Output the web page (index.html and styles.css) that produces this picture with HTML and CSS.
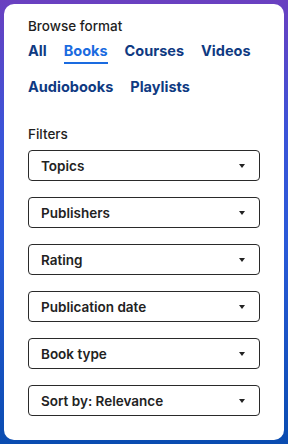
FILE: index.html
```html
<!DOCTYPE html>
<html lang="en">
<head>
  <meta charset="UTF-8">
  <title>Browse format</title>
  <link rel="stylesheet" href="styles.css">
</head>
<body>
  <div class="panel">
    <h3 class="label">Browse format</h3>
    <div class="tabs">
      <a href="#">All</a>
      <a href="#" class="active">Books</a>
      <a href="#">Courses</a>
      <a href="#">Videos</a>
      <a href="#">Audiobooks</a>
      <a href="#">Playlists</a>
    </div>

    <h3 class="label filters-label">Filters</h3>
    <div class="filters">
      <button class="select">Topics <span class="caret"></span></button>
      <button class="select">Publishers <span class="caret"></span></button>
      <button class="select">Rating <span class="caret"></span></button>
      <button class="select">Publication date <span class="caret"></span></button>
      <button class="select">Book type <span class="caret"></span></button>
      <button class="select">Sort by: Relevance <span class="caret"></span></button>
    </div>
  </div>
</body>
</html>
```

FILE: styles.css
```css
body {
  margin: 0;
  padding: 4px;
  height: 444px;
  box-sizing: border-box;
  background: linear-gradient(180deg, #6a40c0 0%, #3a54d8 30%, #2a5ad8 55%, #0a4cb0 100%);
  font-family: Inter, "Noto Sans", sans-serif;
}
.panel {
  background: white;
  border-radius: 10px;
  height: 436px;
  box-sizing: border-box;
  padding: 13px 24px 0 24px;
}
.label {
  margin: 0;
  font-size: 13.5px;
  font-weight: 500;
  color: #1e1e1e;
  line-height: 18px;
}
.tabs {
  display: flex;
  flex-wrap: wrap;
  column-gap: 17px;
  row-gap: 13px;
  margin-top: 6px;
  width: 236px;
}
.tabs a {
  font-size: 14.5px;
  font-weight: 700;
  color: #0f3a82;
  text-decoration: none;
  line-height: 20px;
  padding-bottom: 1px;
  border-bottom: 2px solid transparent;
}
.tabs a.active {
  color: #1a6be0;
  border-bottom-color: #1a6be0;
}
.filters-label {
  margin-top: 25px;
}
.filters {
  display: flex;
  flex-direction: column;
  gap: 16px;
  margin-top: 7px;
  width: 232px;
}
.select {
  display: flex;
  align-items: center;
  justify-content: space-between;
  height: 31px;
  padding: 0 14px 0 12px;
  background: white;
  border: 1px solid #2a2a2a;
  border-radius: 4px;
  font-family: inherit;
  font-size: 13.5px;
  font-weight: 600;
  color: #222;
  text-align: left;
}
.caret {
  width: 0;
  height: 0;
  border-left: 3px solid transparent;
  border-right: 3px solid transparent;
  border-top: 4px solid #222;
}
```
